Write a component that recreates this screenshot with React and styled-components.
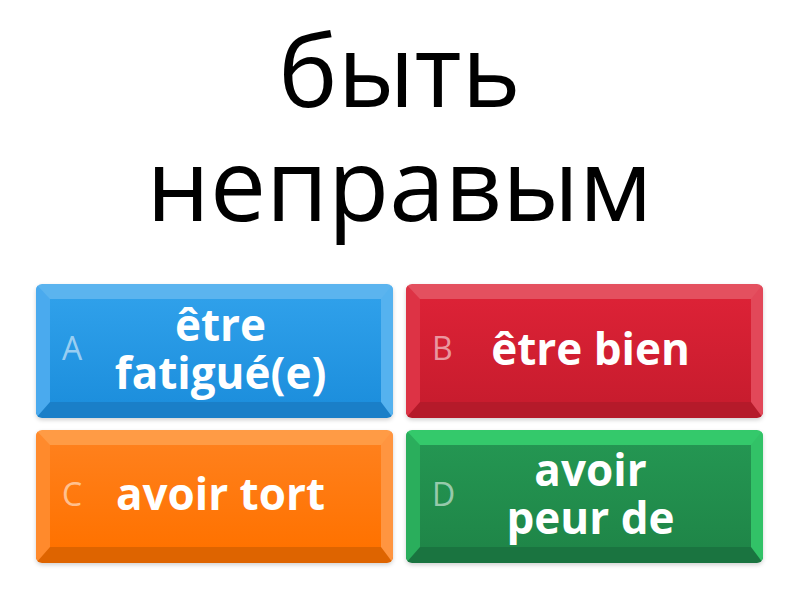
import React from "react";
import styled, { createGlobalStyle } from "styled-components";

const GlobalStyle = createGlobalStyle`
  html, body {
    margin: 0;
    padding: 0;
    background: #ffffff;
  }
  body {
    font-family: "Open Sans", "Noto Sans", sans-serif;
  }
`;

const Page = styled.div`
  width: 800px;
  height: 600px;
  box-sizing: border-box;
  padding: 0 37px 0 36px;
  display: flex;
  flex-direction: column;
`;

const Question = styled.div`
  height: 284px;
  box-sizing: border-box;
  padding-top: 11px;
  text-align: center;
  font-size: 100px;
  line-height: 114px;
  font-weight: 400;
  color: #000;
`;

const Answers = styled.div`
  display: grid;
  grid-template-columns: 357px 357px;
  grid-template-rows: 134px 133px;
  column-gap: 13px;
  row-gap: 12px;
`;

const palette = {
  blue: {
    top: "#5bb4ef",
    side: "#4aaaee",
    right: "#55b2ef",
    bottom: "#1a7fc8",
    faceTop: "#2fa0ea",
    faceBottom: "#1d8fdd",
  },
  red: {
    top: "#e4505f",
    side: "#dd3345",
    right: "#e24859",
    bottom: "#b51a2a",
    faceTop: "#dc2236",
    faceBottom: "#c81c2e",
  },
  orange: {
    top: "#ff9b45",
    side: "#ff8a2c",
    right: "#ff9540",
    bottom: "#de6400",
    faceTop: "#ff801c",
    faceBottom: "#ff7200",
  },
  green: {
    top: "#34c96b",
    side: "#2aae5c",
    right: "#32c267",
    bottom: "#1a7440",
    faceTop: "#249652",
    faceBottom: "#1f8648",
  },
};

const Tile = styled.div`
  box-sizing: border-box;
  border-radius: 6px;
  border-style: solid;
  border-width: 15px 12px 16px 14px;
  border-color: ${p => `${palette[p.tone].top} ${palette[p.tone].right} ${palette[p.tone].bottom} ${palette[p.tone].side}`};
  background: ${p => `linear-gradient(${palette[p.tone].faceTop}, ${palette[p.tone].faceBottom})`};
  box-shadow: 0 2px 4px rgba(0, 0, 0, 0.18);
  display: flex;
  align-items: center;
  color: #fff;
`;

const Letter = styled.div`
  width: 50px;
  flex: none;
  padding-left: 12px;
  box-sizing: border-box;
  font-size: 32px;
  font-weight: 400;
  color: rgba(255, 255, 255, 0.55);
  margin-top: -6px;
`;

const Label = styled.div`
  flex: 1;
  padding-right: 40px;
  text-align: center;
  font-size: 44px;
  line-height: 48px;
  font-weight: 700;
  margin-top: -6px;
`;

const answers = [
  { key: "A", tone: "blue", lines: ["être", "fatigué(e)"] },
  { key: "B", tone: "red", lines: ["être bien"] },
  { key: "C", tone: "orange", lines: ["avoir tort"] },
  { key: "D", tone: "green", lines: ["avoir", "peur de"] },
];

export default function App() {
  return (
    <>
      <GlobalStyle />
      <Page>
        <Question>
          быть
          <br />
          неправым
        </Question>
        <Answers>
          {answers.map(a => (
            <Tile key={a.key} tone={a.tone}>
              <Letter>{a.key}</Letter>
              <Label>
                {a.lines.map((line, i) => (
                  <div key={i}>{line}</div>
                ))}
              </Label>
            </Tile>
          ))}
        </Answers>
      </Page>
    </>
  );
}
